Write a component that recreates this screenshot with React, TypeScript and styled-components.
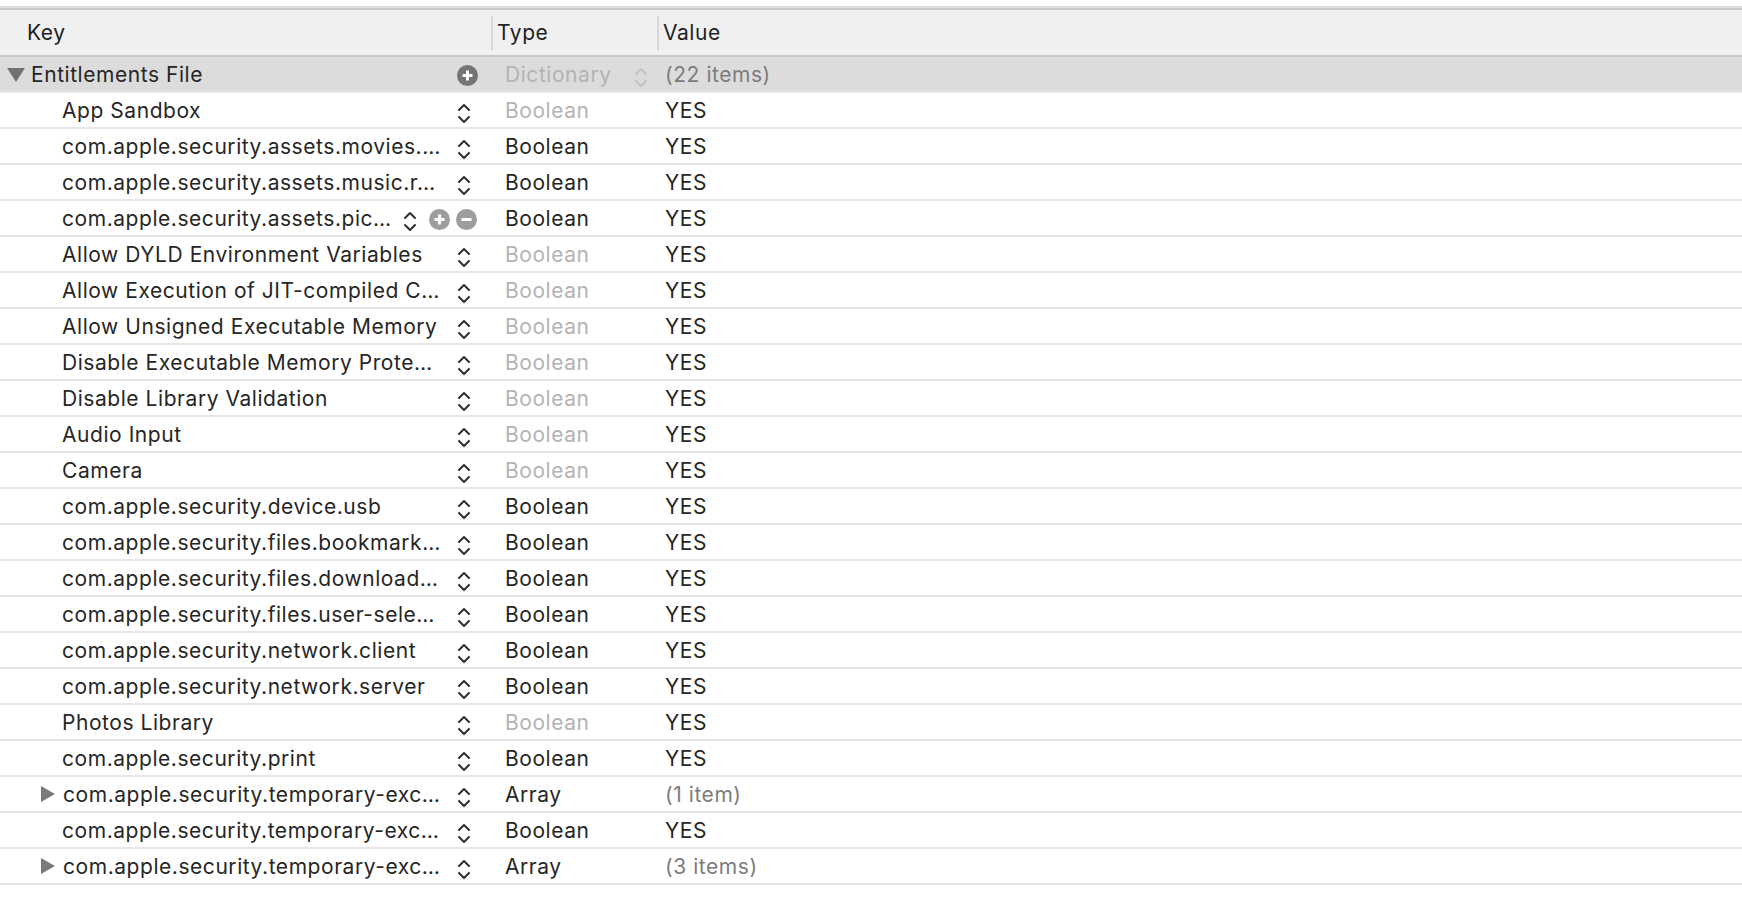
import React from "react";
import styled, { createGlobalStyle } from "styled-components";

const GlobalStyle = createGlobalStyle`
  html, body {
    margin: 0;
    padding: 0;
    background: #ffffff;
  }
  body {
    font-family: Inter, "Noto Sans", "Liberation Sans", sans-serif;
    color: #262626;
    -webkit-font-smoothing: antialiased;
  }
`;

type Row = {
  key: string;
  type: string;
  value: string;
  dimType?: boolean;
  expandable?: boolean;
  hovered?: boolean;
};

const rows: Row[] = [
  { key: "App Sandbox", type: "Boolean", value: "YES", dimType: true },
  { key: "com.apple.security.assets.movies.…", type: "Boolean", value: "YES" },
  { key: "com.apple.security.assets.music.r…", type: "Boolean", value: "YES" },
  { key: "com.apple.security.assets.pic…", type: "Boolean", value: "YES", hovered: true },
  { key: "Allow DYLD Environment Variables", type: "Boolean", value: "YES", dimType: true },
  { key: "Allow Execution of JIT-compiled C…", type: "Boolean", value: "YES", dimType: true },
  { key: "Allow Unsigned Executable Memory", type: "Boolean", value: "YES", dimType: true },
  { key: "Disable Executable Memory Prote…", type: "Boolean", value: "YES", dimType: true },
  { key: "Disable Library Validation", type: "Boolean", value: "YES", dimType: true },
  { key: "Audio Input", type: "Boolean", value: "YES", dimType: true },
  { key: "Camera", type: "Boolean", value: "YES", dimType: true },
  { key: "com.apple.security.device.usb", type: "Boolean", value: "YES" },
  { key: "com.apple.security.files.bookmark…", type: "Boolean", value: "YES" },
  { key: "com.apple.security.files.download…", type: "Boolean", value: "YES" },
  { key: "com.apple.security.files.user-sele…", type: "Boolean", value: "YES" },
  { key: "com.apple.security.network.client", type: "Boolean", value: "YES" },
  { key: "com.apple.security.network.server", type: "Boolean", value: "YES" },
  { key: "Photos Library", type: "Boolean", value: "YES", dimType: true },
  { key: "com.apple.security.print", type: "Boolean", value: "YES" },
  { key: "com.apple.security.temporary-exc…", type: "Array", value: "(1 item)", expandable: true },
  { key: "com.apple.security.temporary-exc…", type: "Boolean", value: "YES" },
  { key: "com.apple.security.temporary-exc…", type: "Array", value: "(3 items)", expandable: true },
];

const Page = styled.div`
  padding-top: 6px;
  font-size: 21px;
  letter-spacing: 0.55px;
`;

const Header = styled.div`
  display: flex;
  align-items: center;
  height: 46px;
  background: #f0f0f0;
  border-top: 2px solid #dddddd;
  box-shadow: inset 0 2px 0 #c9c9c9;
  padding-top: 1px;
  border-bottom: 2px solid #c8c8c8;
  color: #1f1f1f;
`;

const HeaderCell = styled.div<{ $width?: number; $pad: number }>`
  width: ${(p) => (p.$width ? `${p.$width}px` : "auto")};
  flex: ${(p) => (p.$width ? "none" : "1")};
  padding-left: ${(p) => p.$pad}px;
  box-sizing: border-box;
`;

const HeaderDivider = styled.div`
  width: 2px;
  height: 34px;
  margin-top: 1px;
  background: #d8d8d8;
`;

const TableRow = styled.div<{ $root?: boolean }>`
  display: grid;
  grid-template-columns: 493px 164px 1fr;
  height: 34px;
  align-items: center;
  background: ${(p) => (p.$root ? "#dcdcdc" : "#ffffff")};
  border-bottom: 2px solid #e6e6e6;
`;

const KeyCell = styled.div<{ $indent: number }>`
  display: flex;
  align-items: center;
  height: 100%;
  padding-left: ${(p) => p.$indent}px;
  min-width: 0;
`;

const Disclosure = styled.div<{ $open?: boolean }>`
  width: 0;
  height: 0;
  flex: none;
  ${(p) =>
    p.$open
      ? `
    margin: 2px 6px 0 7px;
    border-left: 9px solid transparent;
    border-right: 9px solid transparent;
    border-top: 14px solid #727272;
  `
      : `
    margin: 0 8px 0 0;
    border-top: 8px solid transparent;
    border-bottom: 8px solid transparent;
    border-left: 14px solid #7a7a7a;
  `}
`;

const KeyLabel = styled.span`
  flex: 1;
  min-width: 0;
  white-space: nowrap;
  overflow: hidden;
  text-overflow: ellipsis;
  color: #262626;
`;

const Controls = styled.div<{ $right: number }>`
  display: flex;
  align-items: center;
  gap: 6px;
  margin-right: ${(p) => p.$right}px;
  flex: none;
`;

const ChevronBox = styled.div`
  margin-top: 7px;
  display: flex;
`;

const RoundButton = styled.div<{ $tone: string }>`
  width: 21px;
  height: 21px;
  border-radius: 50%;
  background: ${(p) => p.$tone};
  display: flex;
  align-items: center;
  justify-content: center;
  margin-top: 2px;
`;

const TypeCell = styled.div<{ $dim?: boolean }>`
  display: flex;
  align-items: center;
  height: 100%;
  padding-left: 12px;
  padding-right: 9px;
  color: ${(p) => (p.$dim ? "#b3b3b3" : "#262626")};
`;

const TypeText = styled.span`
  flex: 1;
`;

const ValueCell = styled.div<{ $muted?: boolean }>`
  padding-left: 8px;
  color: ${(p) => (p.$muted ? "#7c7c7c" : "#262626")};
`;

const Chevrons = ({ color }: { color: string }) => (
  <ChevronBox>
    <svg width="14" height="21" viewBox="0 0 14 21" fill="none">
      <polyline points="2,7 7,2 12,7" stroke={color} strokeWidth="2.1" strokeLinecap="round" strokeLinejoin="round" />
      <polyline points="2,14 7,19 12,14" stroke={color} strokeWidth="2.1" strokeLinecap="round" strokeLinejoin="round" />
    </svg>
  </ChevronBox>
);

const PlusIcon = () => (
  <svg width="11" height="11" viewBox="0 0 11 11">
    <rect x="4" y="0.5" width="3" height="10" fill="#fff" />
    <rect x="0.5" y="4" width="10" height="3" fill="#fff" />
  </svg>
);

const MinusIcon = () => (
  <svg width="11" height="11" viewBox="0 0 11 11">
    <rect x="0.5" y="4" width="10" height="3" fill="#fff" />
  </svg>
);

export default function App() {
  return (
    <Page>
      <GlobalStyle />
      <Header>
        <HeaderCell $width={491} $pad={27}>Key</HeaderCell>
        <HeaderDivider />
        <HeaderCell $width={164} $pad={4}>Type</HeaderCell>
        <HeaderDivider />
        <HeaderCell $pad={4}>Value</HeaderCell>
      </Header>

      <TableRow $root>
        <KeyCell $indent={0}>
          <Disclosure $open />
          <KeyLabel>Entitlements File</KeyLabel>
          <Controls $right={15}>
            <RoundButton $tone="#747474">
              <PlusIcon />
            </RoundButton>
          </Controls>
        </KeyCell>
        <TypeCell $dim>
          <TypeText>Dictionary</TypeText>
          <Chevrons color="#c2c2c2" />
        </TypeCell>
        <ValueCell $muted>(22 items)</ValueCell>
      </TableRow>

      {rows.map((r, i) => (
        <TableRow key={i}>
          <KeyCell $indent={r.expandable ? 41 : 62}>
            {r.expandable && <Disclosure />}
            <KeyLabel>{r.key}</KeyLabel>
            {r.hovered ? (
              <Controls $right={16}>
                <Chevrons color="#333" />
                <RoundButton $tone="#9d9d9d" style={{ marginLeft: 6 }}>
                  <PlusIcon />
                </RoundButton>
                <RoundButton $tone="#9d9d9d">
                  <MinusIcon />
                </RoundButton>
              </Controls>
            ) : (
              <Controls $right={22}>
                <Chevrons color="#333" />
              </Controls>
            )}
          </KeyCell>
          <TypeCell $dim={r.dimType}>
            <TypeText>{r.type}</TypeText>
          </TypeCell>
          <ValueCell $muted={r.value.startsWith("(")}>{r.value}</ValueCell>
        </TableRow>
      ))}
    </Page>
  );
}
